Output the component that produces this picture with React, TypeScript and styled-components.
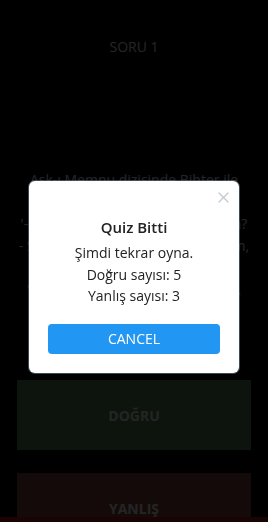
import React from "react";
import styled, { createGlobalStyle } from "styled-components";

const Global = createGlobalStyle`
  html, body { margin: 0; padding: 0; background: #000; }
  body { font-family: "Open Sans", "Noto Sans", sans-serif; }
`;

const Page = styled.div`
  background: #020202;
  color: #fff;
  display: flex;
  flex-direction: column;
  align-items: stretch;
  overflow: hidden;
  height: 522px;
`;

const Header = styled.div`
  flex-shrink: 0;
  height: 93px;
  display: flex;
  align-items: center;
  justify-content: center;
  font-size: 14px;
  font-weight: 400;
  color: #fff;
`;

const Question = styled.div`
  flex-shrink: 0;
  margin-top: 76px;
  padding: 0 10px;
  text-align: center;
  font-size: 14px;
  line-height: 22px;
  color: #fff;
  height: 211px;
`;

const Answers = styled.div`
  flex-shrink: 0;
  display: flex;
  flex-direction: column;
  gap: 23px;
  padding: 0 17px;
`;

const AnswerButton = styled.div<{ $tone: string }>`
  height: 70px;
  background: ${(p) => p.$tone};
  display: flex;
  align-items: center;
  justify-content: center;
  font-weight: 700;
  font-size: 14px;
  color: #fff;
`;

const BottomBar = styled.div`
  position: fixed;
  left: 0;
  right: 0;
  bottom: 0;
  height: 5px;
  background: #b01515;
`;

const Overlay = styled.div`
  position: fixed;
  inset: 0;
  background: rgba(0, 0, 0, 0.86);
  display: flex;
  justify-content: center;
  align-items: flex-start;
  padding-top: 181px;
`;

const Modal = styled.div`
  position: relative;
  width: 210px;
  box-sizing: border-box;
  background: #fff;
  border-radius: 6px;
  box-shadow: 0 0 0 1px rgba(120, 150, 170, 0.5);
  padding: 35px 19px 19px;
  display: flex;
  flex-direction: column;
  align-items: center;
  color: #222;
`;

const Close = styled.button`
  position: absolute;
  top: 9px;
  right: 9px;
  width: 14px;
  height: 14px;
  padding: 0;
  border: none;
  background: none;
  display: flex;
  align-items: center;
  justify-content: center;
  cursor: pointer;
`;

const Title = styled.div`
  font-size: 15px;
  font-weight: 600;
  line-height: 22px;
  color: #222;
  margin-bottom: 4px;
`;

const Body = styled.div`
  font-size: 14px;
  line-height: 21.5px;
  text-align: center;
  color: #222;
`;

const CancelButton = styled.button`
  margin-top: 17px;
  width: 100%;
  height: 30px;
  border: none;
  border-radius: 4px;
  background: #2196f3;
  color: #fff;
  font-family: "Open Sans", "Noto Sans", sans-serif;
  font-size: 14px;
  letter-spacing: 0;
  cursor: pointer;
`;

export default function App() {
  return (
    <>
      <Global />
      <Page>
        <Header>SORU 1</Header>
        <Question>
          Aşk-ı Memnu dizisinde Bihter ile
          <br />
          Behlül'e ne denir?
          <br />
          '-Sen benim en büyük günahımsın?
          <br />
          - Seni hiç unutmayacağım, sevgilim,
          <br />
          dedi Bihter.
          <br />
          'Bu aşk bizi mahvedecek' dediler.
        </Question>
        <Answers>
          <AnswerButton $tone="#5f8a5c">DOĞRU</AnswerButton>
          <AnswerButton $tone="#8f4b46">YANLIŞ</AnswerButton>
        </Answers>
      </Page>
      <BottomBar />
      <Overlay>
        <Modal>
          <Close aria-label="close">
            <svg width="11" height="11" viewBox="0 0 11 11">
              <path d="M1 1L10 10M10 1L1 10" stroke="#c3cad2" strokeWidth="1.4" strokeLinecap="round" />
            </svg>
          </Close>
          <Title>Quiz Bitti</Title>
          <Body>
            Şimdi tekrar oyna.
            <br />
            Doğru sayısı: 5
            <br />
            Yanlış sayısı: 3
          </Body>
          <CancelButton>CANCEL</CancelButton>
        </Modal>
      </Overlay>
    </>
  );
}
